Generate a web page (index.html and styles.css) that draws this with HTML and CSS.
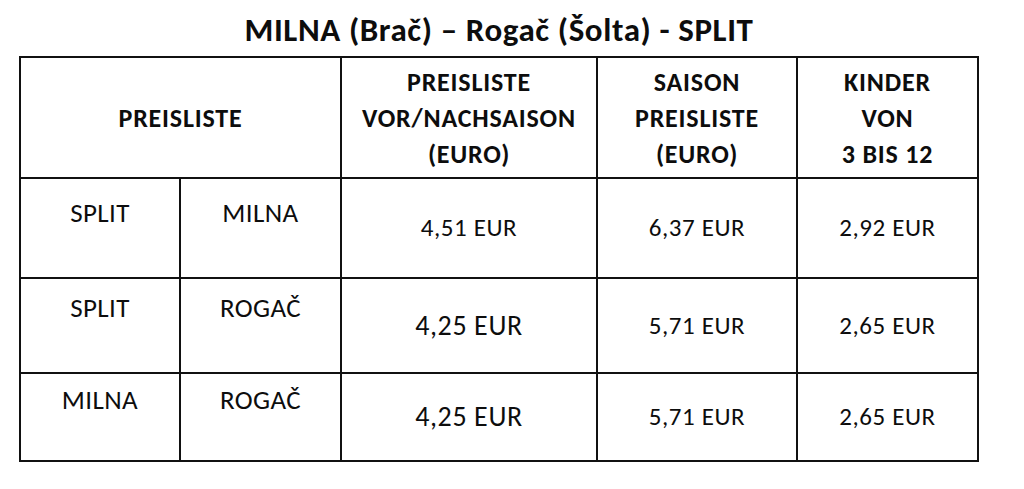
FILE: index.html
```html
<!DOCTYPE html>
<html lang="de">
<head>
<meta charset="utf-8">
<title>MILNA (Brač) – Rogač (Šolta) - SPLIT</title>
<link rel="stylesheet" href="styles.css">
</head>
<body>
<div class="page">
  <h1 class="title">MILNA (Brač) – Rogač (Šolta) - SPLIT</h1>
  <table class="prices">
    <colgroup>
      <col class="c-from">
      <col class="c-to">
      <col class="c-pre">
      <col class="c-season">
      <col class="c-kids">
    </colgroup>
    <thead>
      <tr class="head-row">
        <th colspan="2">PREISLISTE</th>
        <th>PREISLISTE<br>VOR/NACHSAISON<br>(EURO)</th>
        <th>SAISON<br>PREISLISTE<br>(EURO)</th>
        <th>KINDER<br>VON<br>3 BIS 12</th>
      </tr>
    </thead>
    <tbody>
      <tr class="row row-1">
        <td class="place">SPLIT</td>
        <td class="place place-to">MILNA</td>
        <td class="price">4,51 EUR</td>
        <td class="price">6,37 EUR</td>
        <td class="price">2,92 EUR</td>
      </tr>
      <tr class="row row-2">
        <td class="place">SPLIT</td>
        <td class="place place-to">ROGAČ</td>
        <td class="price price-big">4,25 EUR</td>
        <td class="price">5,71 EUR</td>
        <td class="price">2,65 EUR</td>
      </tr>
      <tr class="row row-3">
        <td class="place">MILNA</td>
        <td class="place place-to">ROGAČ</td>
        <td class="price price-big">4,25 EUR</td>
        <td class="price">5,71 EUR</td>
        <td class="price">2,65 EUR</td>
      </tr>
    </tbody>
  </table>
</div>
</body>
</html>
```

FILE: styles.css
```css
html, body {
  margin: 0;
  padding: 0;
  background: #ffffff;
}

body {
  font-family: Carlito, Lato, "Liberation Sans", sans-serif;
  color: #0d0d0d;
}

.page {
  width: 960px;
  margin-left: 19px;
  padding-top: 12px;
}

.title {
  margin: 0 0 8px 0;
  font-size: 33px;
  line-height: 36px;
  font-weight: 700;
  letter-spacing: 0.6px;
  text-align: center;
}

.prices {
  width: 960px;
  table-layout: fixed;
  border-collapse: collapse;
}

.c-from { width: 160px; }
.c-to { width: 161px; }
.c-pre { width: 256px; }
.c-season { width: 200px; }
.c-kids { width: 181px; }

.prices th,
.prices td {
  border: 2px solid #111111;
  padding: 0;
  text-align: center;
}

.head-row { height: 121px; }
.row-1 { height: 100px; }
.row-2 { height: 95px; }
.row-3 { height: 88px; }

.head-row th {
  font-size: 26px;
  line-height: 36px;
  font-weight: 700;
  letter-spacing: 0.8px;
  vertical-align: middle;
}

.place {
  vertical-align: top;
  font-size: 27px;
  line-height: 34px;
  letter-spacing: 0.4px;
  padding-right: 6px;
}

.row-1 .place { padding-top: 17px; }
.row-2 .place { padding-top: 12px; }
.row-3 .place { padding-top: 9px; }

.place-to {
  padding-right: 8px;
}

.price {
  vertical-align: middle;
  font-size: 25px;
  line-height: 30px;
  letter-spacing: 0.6px;
}

.price-big {
  font-size: 28px;
}
```
